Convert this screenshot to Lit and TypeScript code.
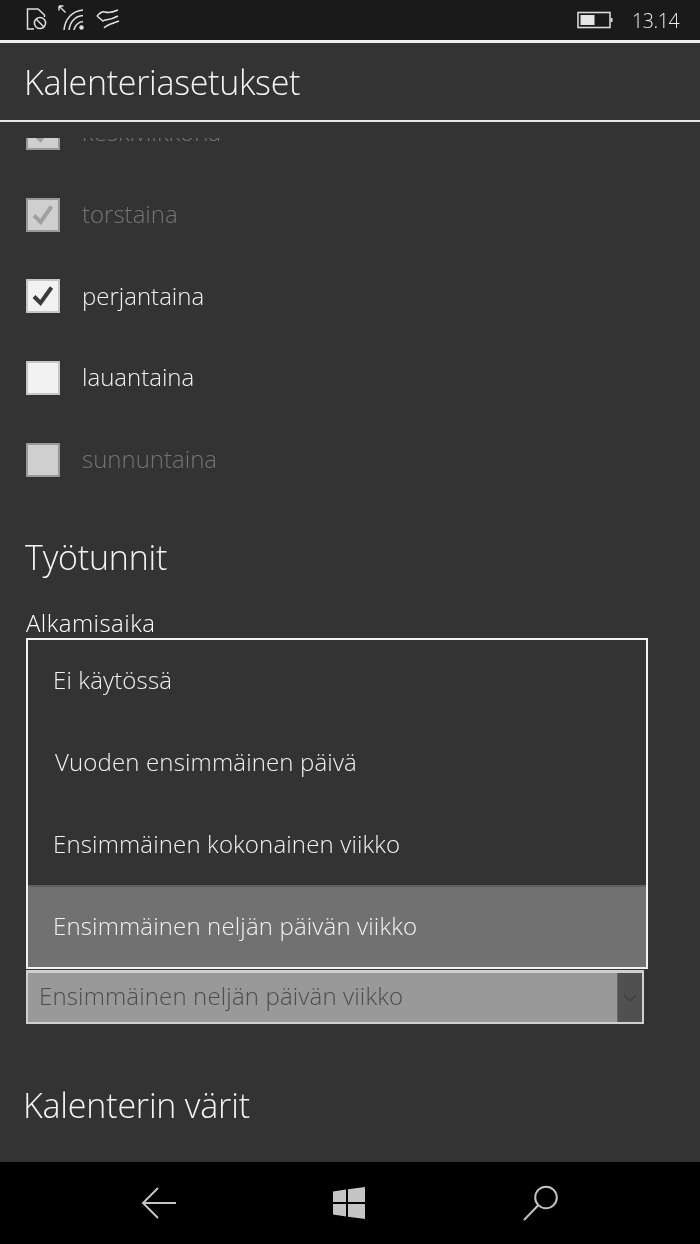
import { LitElement, html, css } from "lit";
import { customElement } from "lit/decorators.js";

const check = (c: string) => html`<svg class="chk" viewBox="0 0 34 34"><path d="M8 17.5 L14.5 24 L25.5 8.5" fill="none" stroke=${c} stroke-width="4"/></svg>`;

@customElement("app-root")
export class AppRoot extends LitElement {
  static styles = css`
    :host { display: flex; flex-direction: column; width: 700px; height: 1244px; background: #333; overflow: hidden; font-family: "Open Sans", "Noto Sans", sans-serif; color: #f2f2f2; position: relative; }
    .time, .title, .row span, h2, .label, .select span, .opt span { will-change: transform; }
    .status { height: 40px; flex: none; background: #1a1a1a; display: flex; align-items: center; box-sizing: border-box; padding: 0 21px 0 26px; color: #e4e4e4; }
    .status .icons { display: flex; align-items: center; flex: 1; }
    .status svg { display: block; }
    .ic1 { margin-top: -2px; }
    .ic2 { margin-left: 10px; }
    .ic3 { margin-left: 8px; }
    .time { font-size: 19.5px; font-weight: 300; margin-left: 19px; letter-spacing: -0.4px; color: #ececec; }
    .head { flex: none; height: 82px; box-sizing: border-box; border-top: 3px solid #eee; border-bottom: 2px solid #e6e6e6; display: flex; align-items: center; padding: 0 24px; font-size: 34px; font-weight: 300; letter-spacing: -0.3px; color: #f5f5f5; }
    .content { flex: 1; min-height: 0; margin-top: 16px; overflow: hidden; position: relative; }
    .rows { margin-top: -46px; padding-left: 26px; }
    .row { height: 81.7px; display: flex; align-items: center; gap: 22px; font-size: 24px; font-weight: 300; }
    .row span { padding-bottom: 2px; }
    .row.dis { color: #747474; }
    .box { width: 34px; height: 34px; box-sizing: border-box; background: #f2f2f2; border: 2px solid #c6c6c6; flex: none; position: relative; }
    .row.dis .box { background: #cfcfcf; border-color: #999; }
    .chk { position: absolute; left: -2px; top: -2px; width: 34px; height: 34px; }
    h2 { margin: 0; font-weight: 300; font-size: 34px; letter-spacing: -0.2px; color: #f5f5f5; line-height: 44px; }
    .h1 { margin: 35px 0 0 25px; }
    .label { margin: 29px 0 0 26px; font-size: 24px; font-weight: 300; line-height: 30px; letter-spacing: 0.45px; color: #fff; }
    .gap { height: 332px; }
    .select { margin-left: 26px; width: 618px; height: 54px; box-sizing: border-box; background: #999; border: 2px solid #d0d0d0; border-top-width: 3px; display: flex; align-items: center; color: #4c4c4c; font-size: 24px; font-weight: 300; letter-spacing: 0.15px; padding-left: 11px; }
    .select span { flex: 1; padding-bottom: 4px; }
    .arrow { width: 24px; height: 100%; flex: none; background: #505050; display: flex; align-items: center; justify-content: center; border-left: 1px solid #666; }
    .h2 { margin: 59px 0 0 23px; }
    .popup { position: absolute; left: 26px; top: 500px; width: 622px; height: 331px; box-sizing: border-box; border: 2px solid #f2f2f2; background: #333; display: flex; flex-direction: column; z-index: 2; }
    .opt { height: 81.7px; box-sizing: border-box; display: flex; align-items: center; padding: 0 0 2px 25px; font-size: 24px; font-weight: 300; letter-spacing: 0.15px; flex: none; }
    .opt.second { padding-left: 27px; }
    .opt.sel { background: #717171; flex: 1; border-top: 2px solid #5f5f5f; padding-bottom: 4px; }
    .nav { flex: none; height: 82px; background: #000; display: flex; align-items: center; justify-content: center; }
    .nav .slot { width: 191px; display: flex; justify-content: center; }
    .nav .win { margin-left: -2px; }
    .nav svg { display: block; }
  `;

  render() {
    return html`
      <div class="status">
        <div class="icons">
          <svg class="ic1" width="22" height="22" viewBox="0 0 22 22" fill="none" stroke="#e0e0e0" stroke-width="1.5">
            <path d="M8 21 H1.5 V1 H12 L18.5 7 V9"/>
            <circle cx="14" cy="15" r="5.6"/><path d="M10 11 L18 19"/>
          </svg>
          <svg class="ic2" width="30" height="30" viewBox="0 0 30 30" fill="none" stroke="#e0e0e0" stroke-width="1.5">
            <path d="M1 1 L7.5 7.5 M1 1 V5.4 M1 1 H5.4" stroke-width="1.4"/>
            <path d="M6 25 C7 14 14 6 25 5"/>
            <path d="M11 25 C12 17 17 11 25 10.5"/>
            <path d="M16 25 C16.5 21 20 17 25 16.5"/>
            <circle cx="23.5" cy="22.5" r="2.2" fill="#e0e0e0" stroke="none"/>
          </svg>
          <svg class="ic3" width="26" height="22" viewBox="0 0 26 22" fill="none" stroke="#e0e0e0" stroke-width="1.5">
            <path d="M1 7 C4 4 6 2 9 3 C12 4 15 4 22 1"/>
            <path d="M1 7 L7 12 C10 10 13 12 22 7"/>
            <path d="M8 19 C12 15 16 15 23 12"/>
          </svg>
        </div>
        <svg width="36" height="18" viewBox="0 0 36 18" fill="none">
          <rect x="1" y="1.5" width="32" height="15" stroke="#d8d8d8" stroke-width="1.6"/>
          <rect x="3.5" y="4" width="14" height="10" fill="#e6e6e6"/>
          <rect x="33.5" y="7" width="2" height="4" fill="#d8d8d8"/>
        </svg>
        <div class="time">13.14</div>
      </div>
      <div class="head"><span class="title">Kalenteriasetukset</span></div>
      <div class="content">
        <div class="rows">
          <div class="row dis"><div class="box">${check("#a0a0a0")}</div><span>keskiviikkona</span></div>
          <div class="row dis"><div class="box">${check("#a0a0a0")}</div><span>torstaina</span></div>
          <div class="row"><div class="box">${check("#3a3a3a")}</div><span>perjantaina</span></div>
          <div class="row"><div class="box"></div><span>lauantaina</span></div>
          <div class="row dis"><div class="box"></div><span>sunnuntaina</span></div>
        </div>
        <h2 class="h1">Työtunnit</h2>
        <div class="label">Alkamisaika</div>
        <div class="gap"></div>
        <div class="select">
          <span>Ensimmäinen neljän päivän viikko</span>
          <div class="arrow"><svg width="14" height="10" viewBox="0 0 14 10"><path d="M1 2 L7 8 L13 2" fill="none" stroke="#3f3f3f" stroke-width="1.6"/></svg></div>
        </div>
        <h2 class="h2">Kalenterin värit</h2>
        <div class="popup">
          <div class="opt"><span>Ei käytössä</span></div>
          <div class="opt second"><span>Vuoden ensimmäinen päivä</span></div>
          <div class="opt"><span>Ensimmäinen kokonainen viikko</span></div>
          <div class="opt sel"><span>Ensimmäinen neljän päivän viikko</span></div>
        </div>
      </div>
      <div class="nav">
        <div class="slot">
          <svg width="36" height="32" viewBox="0 0 36 32" fill="none" stroke="#c4c4c4" stroke-width="2"><path d="M35 16 H2 M17 1 L2 16 L17 31"/></svg>
        </div>
        <div class="slot">
          <svg class="win" width="32" height="32" viewBox="0 0 32 32" fill="#c4c4c4"><path d="M0 4.5 L13 2.6 V15 H0 Z M15 2.3 L32 0 V15 H15 Z M0 17 H13 V29.4 L0 27.5 Z M15 17 H32 V32 L15 29.7 Z"/></svg>
        </div>
        <div class="slot">
          <svg width="36" height="36" viewBox="0 0 36 36" fill="none" stroke="#c4c4c4" stroke-width="2"><circle cx="23" cy="12.5" r="10.8"/><path d="M15 20.5 L1 35"/></svg>
        </div>
      </div>
    `;
  }
}
